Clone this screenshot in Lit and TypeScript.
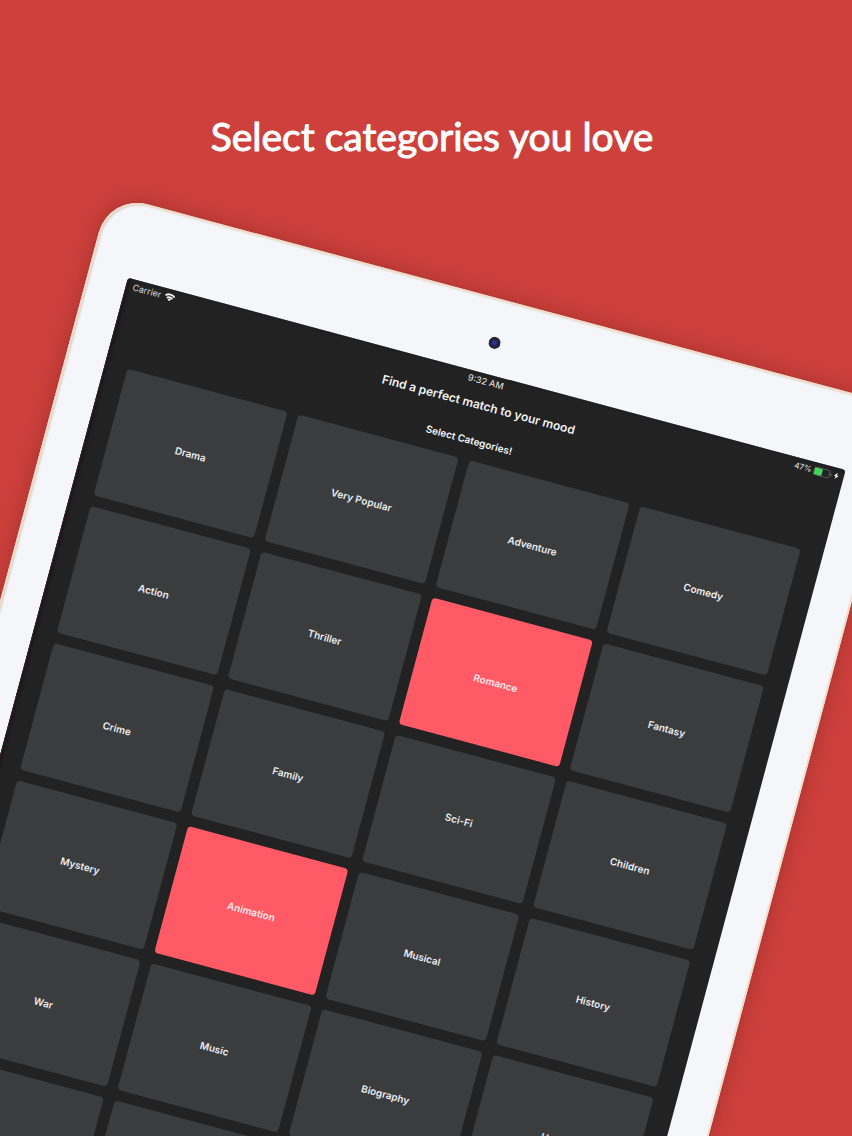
import { LitElement, html, css } from "lit";
import { customElement, state, property } from "lit/decorators.js";
import { classMap } from "lit/directives/class-map.js";

const CATEGORIES = [
  "Drama", "Very Popular", "Adventure", "Comedy",
  "Action", "Thriller", "Romance", "Fantasy",
  "Crime", "Family", "Sci-Fi", "Children",
  "Mystery", "Animation", "Musical", "History",
  "War", "Music", "Biography", "Horror",
  "Western", "Sport",
];

@customElement("status-bar")
class StatusBar extends LitElement {
  static styles = css`
    :host {
      display: grid;
      grid-template-columns: 1fr auto 1fr;
      align-items: center;
      height: 16px;
      padding: 0 5px 0 7px;
      font-size: 9px;
      line-height: 16px;
      color: #d6d6d8;
    }
    .side {
      display: flex;
      align-items: center;
      gap: 3px;
    }
    .end {
      justify-content: flex-end;
      gap: 2px;
    }
    .time {
      font-weight: 500;
    }
    .percent {
      font-size: 8px;
      font-weight: 500;
    }
    svg {
      display: block;
    }
  `;

  render() {
    return html`
      <div class="side">
        <span>Carrier</span>
        <svg width="11" height="8" viewBox="0 0 22 16" fill="none" stroke="#f2f2f4" stroke-width="3.600" aria-hidden="true">
          <path d="M1.500 6.200a13.500 13.500 0 0 1 19 0" />
          <path d="M5.200 10.400a8.200 8.200 0 0 1 11.600 0" />
          <path d="M11 16l-3.600-3.600a5 5 0 0 1 7.200 0z" fill="#f2f2f4" stroke="none" />
        </svg>
      </div>
      <span class="time">9:32 AM</span>
      <div class="side end">
        <span class="percent">47%</span>
        <svg width="19" height="9" viewBox="0 0 19 9" aria-hidden="true">
          <rect x="0.5" y="0.5" width="16" height="8" rx="2" fill="none" stroke="#5c6a62" stroke-width="0.8" />
          <rect x="1" y="1" width="8" height="7" rx="1" fill="#41d35b" />
          <path d="M17.600 3v3q1-.4 1-1.500t-1-1.500z" fill="#7a807c" />
        </svg>
        <svg width="5" height="8" viewBox="0 0 5 8" aria-hidden="true">
          <path d="M3.200 0.500L0 4.500h2L1.500 7.500L5 3.500H2.900z" fill="#f0f0f0" />
        </svg>
      </div>
    `;
  }
}

@customElement("category-tile")
class CategoryTile extends LitElement {
  @property() label = "";
  @property({ type: Boolean }) selected = false;

  static styles = css`
    :host {
      display: block;
    }
    .tile {
      display: block;
      width: 100%;
      height: 131px;
      padding: 0;
      border: 0;
      border-radius: 4px;
      background: #3b3c3e;
      color: #ececee;
      font: 600 10px/16px Inter, "Liberation Sans", sans-serif;
      cursor: pointer;
    }
    .selected {
      background: #ff5a66;
      color: #ffe9ea;
    }
  `;

  render() {
    return html`<button
      class=${classMap({ tile: true, selected: this.selected })}
      aria-pressed=${this.selected ? "true" : "false"}
    >${this.label}</button>`;
  }
}

@customElement("app-root")
class AppRoot extends LitElement {
  @state() private chosen = new Set(["Romance", "Animation"]);

  static styles = css`
    :host {
      display: block;
      height: 100vh;
      overflow: hidden;
      background: #cd403c;
      font-family: Inter, "Liberation Sans", sans-serif;
    }
    .headline {
      margin: 0;
      padding: 108px 16px 30px 28px;
      text-align: center;
      color: #fff;
      font: 400 39px/56px Lato, "Open Sans", sans-serif;
      -webkit-text-stroke: 1px #fff;
    }
    .tablet {
      position: relative;
      box-sizing: border-box;
      width: calc(100% - 29px);
      margin-left: 109px;
      padding: 76px 40px;
      border-radius: 40px;
      background: #f4f6f9;
      box-shadow: inset 0 0 0 2px #f3dcc8, inset 2px 1px 3px #b9a898, 0 0 20px rgba(60, 10, 10, 0.28);
      transform: rotate(15deg);
      transform-origin: top left;
    }
    .camera {
      position: absolute;
      top: 38px;
      left: calc(50% - 7px);
    }
    .screen {
      border-radius: 3px;
      background: #222223;
      box-shadow: inset 1px 0 0 #3c1d22, inset 3px 0 3px #1a1618;
    }
    .title,
    .subtitle {
      margin: 0;
      text-align: center;
      color: #f2f2f3;
      line-height: 20px;
      font-weight: 600;
    }
    .title {
      padding-top: 6px;
      font-size: 12px;
    }
    .subtitle {
      padding: 16px 0 10px;
      font-size: 10px;
    }
    .grid {
      display: grid;
      grid-template-columns: repeat(4, 1fr);
      gap: 11px;
      padding: 0 23px 23px;
    }
  `;

  private toggle(name: string) {
    const next = new Set(this.chosen);
    if (!next.delete(name)) next.add(name);
    this.chosen = next;
  }

  render() {
    return html`
      <h1 class="headline">Select categories you love</h1>
      <main class="tablet">
        <svg class="camera" width="12" height="12" viewBox="0 0 12 12" aria-hidden="true">
          <circle cx="6" cy="6" r="6" fill="#24262d" />
          <circle cx="6" cy="6" r="3.200" fill="#20257a" />
          <circle cx="6" cy="6" r="1.800" fill="#3543c8" />
          <circle cx="6" cy="6" r="0.8" fill="#1c2060" />
        </svg>
        <div class="screen">
          <status-bar></status-bar>
          <h2 class="title">Find a perfect match to your mood</h2>
          <p class="subtitle">Select Categories!</p>
          <div class="grid">
            ${CATEGORIES.map(
              (name) => html`<category-tile
                .label=${name}
                .selected=${this.chosen.has(name)}
                @click=${() => this.toggle(name)}
              ></category-tile>`,
            )}
          </div>
        </div>
      </main>
    `;
  }
}
